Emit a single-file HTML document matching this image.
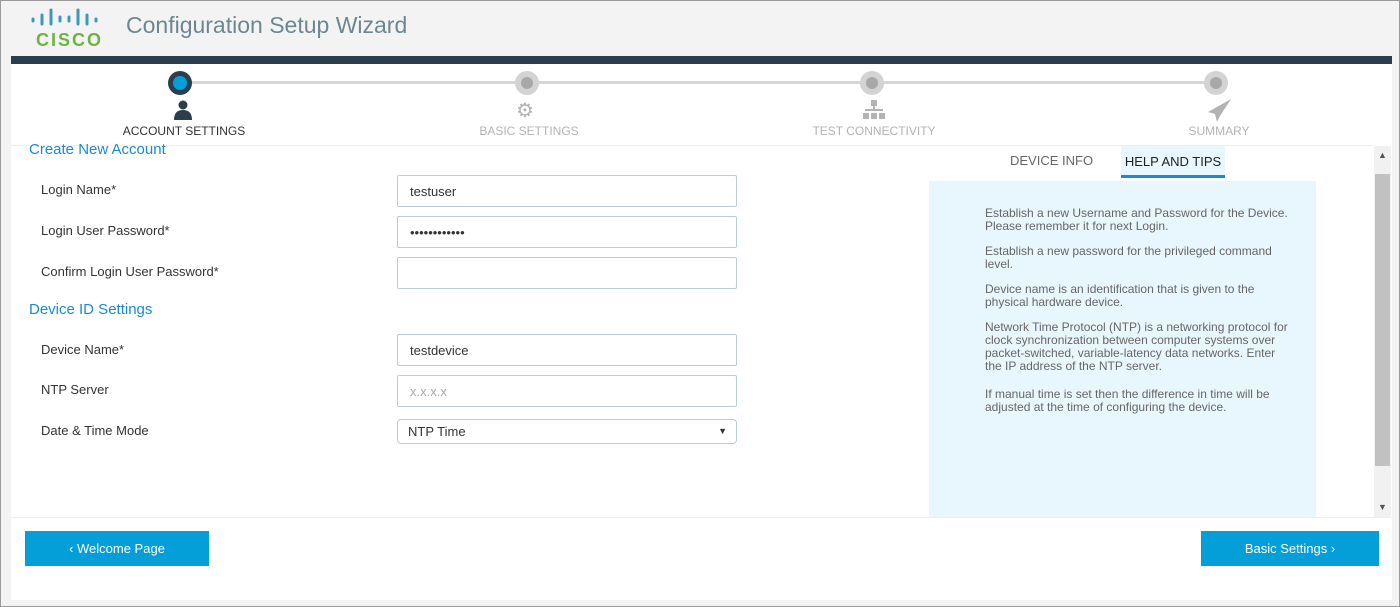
<!DOCTYPE html>
<html><head><style>
*{margin:0;padding:0;box-sizing:border-box}
body{width:1400px;height:607px;background:#f3f3f3;font-family:"Liberation Sans",sans-serif;position:relative;overflow:hidden}
.a{position:absolute}
.frame{left:0;top:0;width:1400px;height:607px;border:1px solid #9a9a9a}
.title{left:126px;top:12px;font-size:23px;color:#6d8792}
.bar{left:11px;top:56px;width:1381px;height:8px;background:#2b3e4b}
.panel{left:11px;top:64px;width:1381px;height:536px;background:#fff}
.line{top:81px;height:3px;background:#d6d6d6}
.dot{width:24px;height:24px;border-radius:50%;background:#d3d3d3;top:71px}
.dot i{position:absolute;left:6px;top:6px;width:12px;height:12px;border-radius:50%;background:#a8a8a8}
.step{top:124px;font-size:12px;color:#b3b3b3;width:200px;text-align:center}
.lbl{left:41px;font-size:13px;color:#333}
.inp{left:397px;width:340px;height:32px;border:1px solid #bdcbd2;border-radius:2px;font-size:13px;color:#333;padding:8px 12px}
.sec{left:29px;font-size:15px;color:#1b8ad0}
.help{left:929px;top:181px;width:387px;height:336px;background:#e8f6fd}
.help p{position:absolute;left:56px;width:310px;font-size:12px;color:#666;line-height:13px}
.btn{top:531px;height:35px;background:#049fd9;color:#fff;font-size:13px;text-align:center;line-height:35px}
</style></head><body>
<svg class="a" style="left:30px;top:8px" width="75" height="42" viewBox="0 0 75 42">
<g stroke="#3d9ab5" stroke-width="3" stroke-linecap="round">
<line x1="3" y1="11" x2="3" y2="13"/><line x1="12" y1="7" x2="12" y2="16"/><line x1="21" y1="2" x2="21" y2="16"/><line x1="30" y1="9" x2="30" y2="13"/><line x1="39" y1="9" x2="39" y2="13"/><line x1="48" y1="2" x2="48" y2="16"/><line x1="57" y1="7" x2="57" y2="16"/><line x1="66" y1="11" x2="66" y2="13"/></g>
<text x="6" y="38" font-family="Liberation Sans" font-weight="bold" font-size="18" fill="#6eb33f" letter-spacing="2">CISCO</text></svg>
<div class="a title">Configuration Setup Wizard</div>
<div class="a bar"></div>
<div class="a panel"></div>
<div class="a line" style="left:190px;width:1026px"></div>
<div class="a dot" style="left:168px;background:#2b3e4b"><i style="background:#049fd9;left:5px;top:5px;width:14px;height:14px"></i></div>
<div class="a dot" style="left:515px"><i></i></div>
<div class="a dot" style="left:860px"><i></i></div>
<div class="a dot" style="left:1204px"><i></i></div>
<svg class="a" style="left:173px;top:100px" width="20" height="20"><circle cx="10" cy="5" r="4.5" fill="#2b3e4b"/><path d="M1 20 Q1 10 10 10 Q19 10 19 20Z" fill="#2b3e4b"/></svg>
<div class="a" style="left:516px;top:98px;font-size:20px;color:#b3b3b3">⚙</div>
<svg class="a" style="left:862px;top:100px" width="24" height="20" fill="#b3b3b3"><rect x="9" y="0" width="6" height="6"/><rect x="11" y="6" width="2" height="4"/><rect x="3" y="9" width="18" height="2"/><rect x="1" y="13" width="6" height="6"/><rect x="9" y="13" width="6" height="6"/><rect x="17" y="13" width="6" height="6"/></svg>
<svg class="a" style="left:1206px;top:98px" width="26" height="26"><path d="M25 1 L2 14 L9 16 L11 24 L14 18Z" fill="#b3b3b3"/></svg>
<div class="a step" style="left:84px;color:#333">ACCOUNT SETTINGS</div>
<div class="a step" style="left:429px">BASIC SETTINGS</div>
<div class="a step" style="left:774px">TEST CONNECTIVITY</div>
<div class="a step" style="left:1119px">SUMMARY</div>
<div class="a" style="left:11px;top:145px;width:1362px;height:1px;background:#eee"></div>
<div class="a sec" style="top:141px">Create New Account</div>
<div class="a lbl" style="top:182px">Login Name*</div>
<div class="a lbl" style="top:223px">Login User Password*</div>
<div class="a lbl" style="top:264px">Confirm Login User Password*</div>
<div class="a inp" style="top:175px">testuser</div>
<div class="a inp" style="top:216px">••••••••••••</div>
<div class="a inp" style="top:257px"></div>
<div class="a sec" style="top:301px">Device ID Settings</div>
<div class="a lbl" style="top:342px">Device Name*</div>
<div class="a lbl" style="top:382px">NTP Server</div>
<div class="a lbl" style="top:423px">Date &amp; Time Mode</div>
<div class="a inp" style="top:334px">testdevice</div>
<div class="a inp" style="top:375px;color:#aaa">x.x.x.x</div>
<div class="a inp" style="top:419px;height:25px;padding:4px 10px;border-radius:4px">NTP Time<span style="position:absolute;right:9px;top:6px;font-size:9px">▼</span></div>
<div class="a" style="left:1010px;top:153px;font-size:13px;color:#666">DEVICE INFO</div>
<div class="a" style="left:1121px;top:146px;width:104px;height:32px;background:#e8f6fd;border-bottom:3px solid #1b8ad0;font-size:13px;color:#222;padding-top:8px;text-align:center">HELP AND TIPS</div>
<div class="help a">
<p style="top:26px">Establish a new Username and Password for the Device. Please remember it for next Login.</p>
<p style="top:64px">Establish a new password for the privileged command level.</p>
<p style="top:102px">Device name is an identification that is given to the physical hardware device.</p>
<p style="top:140px">Network Time Protocol (NTP) is a networking protocol for clock synchronization between computer systems over packet-switched, variable-latency data networks. Enter the IP address of the NTP server.</p>
<p style="top:207px">If manual time is set then the difference in time will be adjusted at the time of configuring the device.</p>
</div>
<div class="a" style="left:1374px;top:146px;width:17px;height:371px;background:#f1f1f1"></div>
<div class="a" style="left:1375px;top:174px;width:15px;height:292px;background:#c1c1c1"></div>
<div class="a" style="left:1378px;top:150px;font-size:9px;color:#555">▲</div>
<div class="a" style="left:1378px;top:502px;font-size:9px;color:#555">▼</div>
<div class="a" style="left:11px;top:517px;width:1381px;height:1px;background:#eee"></div>
<div class="a btn" style="left:25px;width:184px">‹ Welcome Page</div>
<div class="a btn" style="left:1201px;width:178px">Basic Settings ›</div>
<div class="a frame"></div>
</body></html>
